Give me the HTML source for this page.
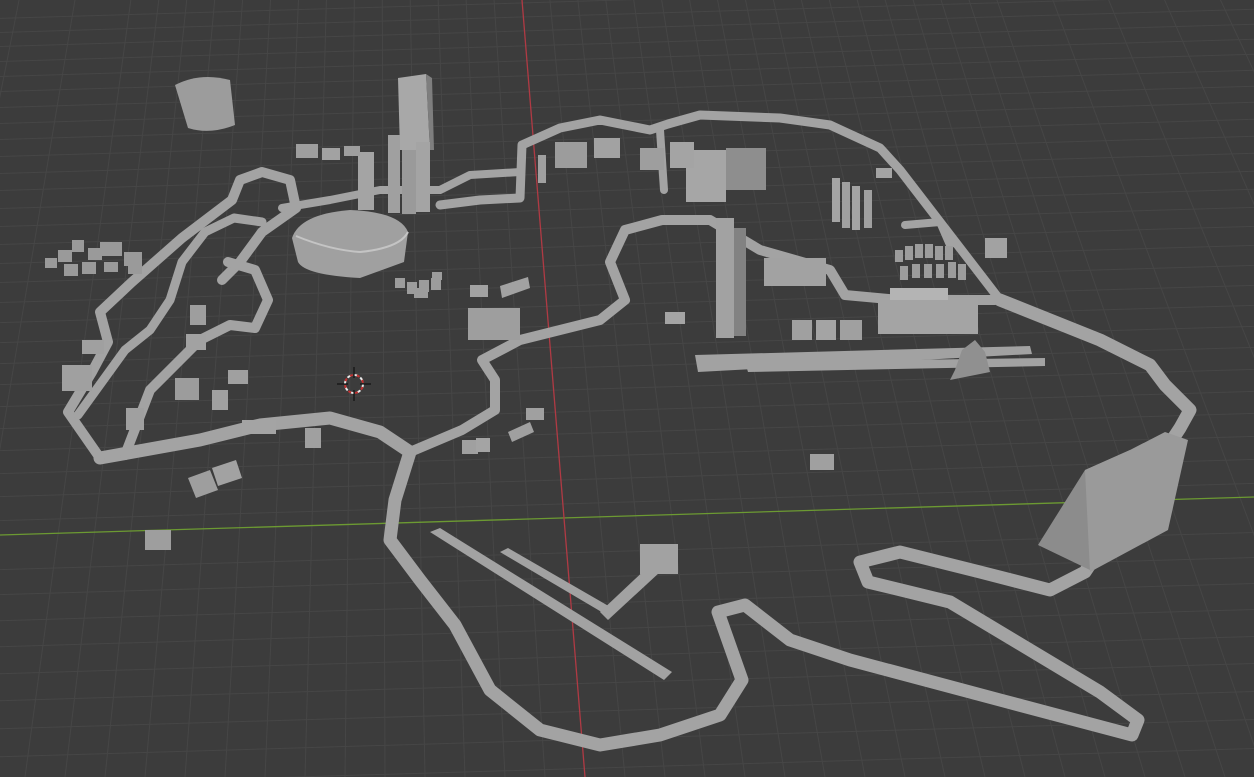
<!DOCTYPE html>
<html><head><meta charset="utf-8"><style>
html,body{margin:0;padding:0;background:#3c3c3c;overflow:hidden}
svg{display:block}
</style></head><body>
<svg width="1254" height="777" viewBox="0 0 1254 777" xmlns="http://www.w3.org/2000/svg">
<rect width="1254" height="777" fill="#3c3c3c"/>
<g stroke="#464646" stroke-width="1" transform="rotate(-1.7 627 400)">
<line x1="-100" x2="1400" y1="0" y2="0"/><line x1="-100" x2="1400" y1="14" y2="14"/><line x1="-100" x2="1400" y1="28" y2="28"/><line x1="-100" x2="1400" y1="43" y2="43"/><line x1="-100" x2="1400" y1="58" y2="58"/><line x1="-100" x2="1400" y1="73" y2="73"/><line x1="-100" x2="1400" y1="89" y2="89"/><line x1="-100" x2="1400" y1="105" y2="105"/><line x1="-100" x2="1400" y1="121" y2="121"/><line x1="-100" x2="1400" y1="138" y2="138"/><line x1="-100" x2="1400" y1="155" y2="155"/><line x1="-100" x2="1400" y1="172" y2="172"/><line x1="-100" x2="1400" y1="190" y2="190"/><line x1="-100" x2="1400" y1="208" y2="208"/><line x1="-100" x2="1400" y1="226" y2="226"/><line x1="-100" x2="1400" y1="245" y2="245"/><line x1="-100" x2="1400" y1="264" y2="264"/><line x1="-100" x2="1400" y1="284" y2="284"/><line x1="-100" x2="1400" y1="304" y2="304"/><line x1="-100" x2="1400" y1="324" y2="324"/><line x1="-100" x2="1400" y1="345" y2="345"/><line x1="-100" x2="1400" y1="366" y2="366"/><line x1="-100" x2="1400" y1="388" y2="388"/><line x1="-100" x2="1400" y1="410" y2="410"/><line x1="-100" x2="1400" y1="432" y2="432"/><line x1="-100" x2="1400" y1="455" y2="455"/><line x1="-100" x2="1400" y1="478" y2="478"/><line x1="-100" x2="1400" y1="502" y2="502"/><line x1="-100" x2="1400" y1="551" y2="551"/><line x1="-100" x2="1400" y1="576" y2="576"/><line x1="-100" x2="1400" y1="602" y2="602"/><line x1="-100" x2="1400" y1="628" y2="628"/><line x1="-100" x2="1400" y1="655" y2="655"/><line x1="-100" x2="1400" y1="682" y2="682"/><line x1="-100" x2="1400" y1="710" y2="710"/><line x1="-100" x2="1400" y1="738" y2="738"/><line x1="-100" x2="1400" y1="767" y2="767"/>
</g>
<g stroke="#464646" stroke-width="1">
<line x1="376" y1="-1800" x2="-535" y2="777"/><line x1="376" y1="-1800" x2="-455" y2="777"/><line x1="376" y1="-1800" x2="-375" y2="777"/><line x1="376" y1="-1800" x2="-295" y2="777"/><line x1="376" y1="-1800" x2="-215" y2="777"/><line x1="376" y1="-1800" x2="-135" y2="777"/><line x1="376" y1="-1800" x2="-55" y2="777"/><line x1="376" y1="-1800" x2="25" y2="777"/><line x1="376" y1="-1800" x2="65" y2="777"/><line x1="376" y1="-1800" x2="105" y2="777"/><line x1="376" y1="-1800" x2="145" y2="777"/><line x1="376" y1="-1800" x2="185" y2="777"/><line x1="376" y1="-1800" x2="225" y2="777"/><line x1="376" y1="-1800" x2="265" y2="777"/><line x1="376" y1="-1800" x2="305" y2="777"/><line x1="376" y1="-1800" x2="345" y2="777"/><line x1="376" y1="-1800" x2="385" y2="777"/><line x1="376" y1="-1800" x2="425" y2="777"/><line x1="376" y1="-1800" x2="465" y2="777"/><line x1="376" y1="-1800" x2="505" y2="777"/><line x1="376" y1="-1800" x2="545" y2="777"/><line x1="376" y1="-1800" x2="625" y2="777"/><line x1="376" y1="-1800" x2="665" y2="777"/><line x1="376" y1="-1800" x2="705" y2="777"/><line x1="376" y1="-1800" x2="745" y2="777"/><line x1="376" y1="-1800" x2="785" y2="777"/><line x1="376" y1="-1800" x2="825" y2="777"/><line x1="376" y1="-1800" x2="865" y2="777"/><line x1="376" y1="-1800" x2="905" y2="777"/><line x1="376" y1="-1800" x2="945" y2="777"/><line x1="376" y1="-1800" x2="985" y2="777"/><line x1="376" y1="-1800" x2="1025" y2="777"/><line x1="376" y1="-1800" x2="1065" y2="777"/><line x1="376" y1="-1800" x2="1105" y2="777"/><line x1="376" y1="-1800" x2="1145" y2="777"/><line x1="376" y1="-1800" x2="1185" y2="777"/><line x1="376" y1="-1800" x2="1225" y2="777"/><line x1="376" y1="-1800" x2="1265" y2="777"/><line x1="376" y1="-1800" x2="1345" y2="777"/><line x1="376" y1="-1800" x2="1425" y2="777"/><line x1="376" y1="-1800" x2="1505" y2="777"/><line x1="376" y1="-1800" x2="1585" y2="777"/><line x1="376" y1="-1800" x2="1665" y2="777"/><line x1="376" y1="-1800" x2="1745" y2="777"/>
</g>
<line x1="0" y1="535" x2="1254" y2="497" stroke="#6c9a32" stroke-width="1.3"/>
<line x1="522" y1="0" x2="585" y2="777" stroke="#b03a44" stroke-width="1.3"/>

<g fill="none" stroke="#a3a3a3" stroke-linejoin="round" stroke-linecap="round">
<path stroke-width="13" d="M100,458 L200,440 L260,425 L330,418 L380,432 L410,452 L395,500 L390,540 L420,580 L455,625 L490,690 L540,730 L600,745 L660,735 L720,715 L742,680 L718,612 L745,605 L790,640 L850,660 L1000,700 L1132,735 L1138,720 L1100,692 L950,602 L868,582 L860,562 L900,552 L980,572 L1050,590 L1085,572 L1180,428 L1190,410 L1165,385 L1150,365 L1100,340 L1000,300"/>
<path stroke-width="9" d="M1000,300 L960,248 L900,170 L880,148 L830,125 L780,118 L700,115 L668,124 L650,130 L600,120 L560,128 L522,145 L520,198 L480,200 L440,205"/>
<path stroke-width="10" d="M410,452 L462,430 L495,410 L495,380 L482,360 L520,340 L600,320 L625,300 L610,262 L625,230 L662,220 L710,220 L760,250 L830,270 L845,295 L900,300 L995,300"/>
<path stroke-width="10" d="M100,458 L68,412 L92,372 L108,342 L100,312 L132,282 L182,238 L232,200 L240,180 L262,172 L290,180 L296,208 L262,232 L240,262 L222,280"/>
<path stroke-width="9" d="M78,415 L125,350 L150,330 L170,300 L182,262 L205,232 L234,218 L262,222"/>
<path stroke-width="10" d="M125,455 L150,390 L200,340 L230,325 L255,328 L268,300 L255,270 L228,262"/>
<path stroke-width="8" d="M282,208 L330,200 L380,190 L440,190 L470,175 L520,172"/>
<path stroke-width="8" d="M660,130 L664,190"/>
<path stroke-width="8" d="M905,225 L940,222 L950,245"/>
</g>
<g fill="#a2a2a2" stroke="none">
<polygon points="430,532 440,528 672,672 664,680"/>
<polygon points="500,552 508,548 612,608 605,614"/>
<polygon points="600,612 650,565 660,572 608,620"/>
<polygon points="695,355 1030,346 1032,354 698,372"/>
<polygon points="745,362 1045,358 1045,366 748,372"/>
</g>
<g>
<polygon points="1038,545 1085,470 1130,450 1090,570" fill="#8c8c8c"/>
<polygon points="1085,470 1130,450 1165,432 1188,440 1168,530 1090,572" fill="#9a9a9a"/>
<polygon points="398,78 426,74 430,150 400,150" fill="#a8a8a8"/>
<polygon points="426,74 432,78 434,150 430,150" fill="#7e7e7e"/>
<rect x="388" y="135" width="12" height="78" fill="#a0a0a0"/><rect x="402" y="150" width="14" height="64" fill="#9a9a9a"/><rect x="416" y="142" width="14" height="70" fill="#a4a4a4"/>
<rect x="358" y="152" width="16" height="58" fill="#a4a4a4"/>
<rect x="716" y="218" width="18" height="120" fill="#a2a2a2"/>
<rect x="734" y="228" width="12" height="108" fill="#828282"/>
<rect x="686" y="150" width="40" height="52" fill="#a6a6a6"/>
<rect x="726" y="148" width="40" height="42" fill="#8e8e8e"/>
<rect x="832" y="178" width="8" height="44" fill="#a4a4a4"/><rect x="842" y="182" width="8" height="46" fill="#a0a0a0"/><rect x="852" y="186" width="8" height="44" fill="#a4a4a4"/><rect x="864" y="190" width="8" height="38" fill="#a0a0a0"/>
<path d="M292,238 Q300,214 350,210 Q400,212 408,232 L404,262 L360,278 Q305,275 298,262 Z" fill="#a0a0a0"/>
<path d="M296,236 Q330,250 360,252 Q400,248 408,232" fill="none" stroke="#c4c4c4" stroke-width="2"/>
<path d="M175,85 Q200,72 230,80 L235,125 Q210,135 188,128 Z" fill="#9c9c9c"/>
<rect x="468" y="308" width="52" height="32" fill="#9e9e9e"/>
<rect x="764" y="258" width="62" height="28" fill="#a2a2a2"/>
<rect x="878" y="298" width="100" height="36" fill="#a4a4a4"/>
<rect x="890" y="288" width="58" height="12" fill="#b4b4b4"/>
<rect x="792" y="320" width="20" height="20" fill="#a0a0a0"/><rect x="816" y="320" width="20" height="20" fill="#a4a4a4"/><rect x="840" y="320" width="22" height="20" fill="#a0a0a0"/>
<rect x="555" y="142" width="32" height="26" fill="#9c9c9c"/>
<rect x="594" y="138" width="26" height="20" fill="#a2a2a2"/>
<rect x="640" y="148" width="24" height="22" fill="#9e9e9e"/><rect x="670" y="142" width="24" height="26" fill="#a4a4a4"/>
<g fill="#9c9c9c"><rect x="895" y="250" width="8" height="12"/><rect x="905" y="246" width="8" height="14"/><rect x="915" y="244" width="8" height="14"/><rect x="925" y="244" width="8" height="14"/><rect x="935" y="246" width="8" height="14"/><rect x="945" y="246" width="8" height="14"/><rect x="900" y="266" width="8" height="14"/><rect x="912" y="264" width="8" height="14"/><rect x="924" y="264" width="8" height="14"/><rect x="936" y="264" width="8" height="14"/><rect x="948" y="262" width="8" height="16"/><rect x="958" y="264" width="8" height="16"/></g>
<polygon points="950,380 990,372 985,352 975,340 962,350 955,370" fill="#909090"/>
<polygon points="500,286 528,277 530,288 502,298" fill="#a2a2a2"/>
<rect x="470" y="285" width="18" height="12" fill="#a2a2a2"/>
<g fill="#9c9c9c"><rect x="395" y="278" width="10" height="10"/><rect x="407" y="282" width="10" height="12"/><rect x="419" y="280" width="10" height="12"/><rect x="431" y="278" width="10" height="12"/><rect x="414" y="288" width="14" height="10"/><rect x="432" y="272" width="10" height="8"/></g>
<rect x="665" y="312" width="20" height="12" fill="#a4a4a4"/>
<rect x="810" y="454" width="24" height="16" fill="#a0a0a0"/>
<rect x="640" y="544" width="38" height="30" fill="#a2a2a2"/>
<polygon points="508,432 530,422 534,432 512,442" fill="#a0a0a0"/><rect x="526" y="408" width="18" height="12" fill="#a0a0a0"/>
<rect x="462" y="440" width="16" height="14" fill="#a0a0a0"/><rect x="476" y="438" width="14" height="14" fill="#a4a4a4"/>
<polygon points="188,478 210,470 218,490 196,498" fill="#9e9e9e"/><polygon points="212,468 236,460 242,478 218,486" fill="#a2a2a2"/>
<rect x="145" y="530" width="26" height="20" fill="#9e9e9e"/>
<rect x="305" y="428" width="16" height="20" fill="#a0a0a0"/>
<rect x="242" y="420" width="34" height="14" fill="#a4a4a4"/>
<rect x="175" y="378" width="24" height="22" fill="#9c9c9c"/><rect x="212" y="390" width="16" height="20" fill="#a0a0a0"/><rect x="228" y="370" width="20" height="14" fill="#a0a0a0"/>
<rect x="126" y="408" width="18" height="22" fill="#a0a0a0"/>
<rect x="62" y="365" width="30" height="26" fill="#a0a0a0"/>
<rect x="82" y="340" width="22" height="14" fill="#a0a0a0"/>
<g fill="#9a9a9a"><rect x="45" y="258" width="12" height="10"/><rect x="58" y="250" width="14" height="12"/><rect x="72" y="240" width="12" height="12"/><rect x="64" y="264" width="14" height="12"/><rect x="82" y="262" width="14" height="12"/><rect x="88" y="248" width="14" height="12"/><rect x="100" y="242" width="22" height="14"/><rect x="104" y="262" width="14" height="10"/><rect x="124" y="252" width="18" height="14"/><rect x="128" y="264" width="14" height="10"/></g>
<rect x="296" y="144" width="22" height="14" fill="#9e9e9e"/><rect x="322" y="148" width="18" height="12" fill="#a2a2a2"/><rect x="344" y="146" width="16" height="10" fill="#9e9e9e"/>
<rect x="190" y="305" width="16" height="20" fill="#9e9e9e"/><rect x="186" y="334" width="20" height="16" fill="#a2a2a2"/>
<rect x="985" y="238" width="22" height="20" fill="#a2a2a2"/>
<rect x="876" y="168" width="16" height="10" fill="#a4a4a4"/>
<rect x="538" y="155" width="8" height="28" fill="#a0a0a0"/>
</g>
<g transform="translate(354,384)">
<circle r="9" fill="none" stroke="#e8e8e8" stroke-width="2" stroke-dasharray="4 3"/>
<circle r="9" fill="none" stroke="#c03030" stroke-width="2" stroke-dasharray="3 4" stroke-dashoffset="4"/>
<line x1="-17" x2="-6" y1="0" y2="0" stroke="#111" stroke-width="1.2"/>
<line x1="6" x2="17" y1="0" y2="0" stroke="#111" stroke-width="1.2"/>
<line y1="-17" y2="-6" x1="0" x2="0" stroke="#111" stroke-width="1.2"/>
<line y1="6" y2="17" x1="0" x2="0" stroke="#111" stroke-width="1.2"/>
</g>
</svg>
</body></html>
